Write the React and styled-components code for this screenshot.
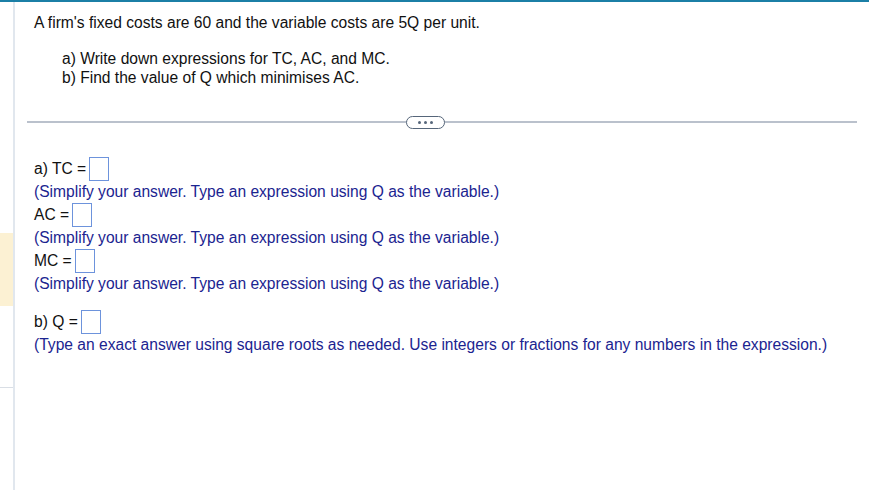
import React from "react";
import styled, { createGlobalStyle } from "styled-components";

const GlobalStyle = createGlobalStyle`
  html, body {
    margin: 0;
    padding: 0;
    background: #fff;
  }
  body {
    font-family: "Liberation Sans", Arial, sans-serif;
    font-size: 15.6px;
    color: #111;
  }
`;

const parts = [
  { label: "a) TC =", hint: "(Simplify your answer. Type an expression using Q as the variable.)" },
  { label: "AC =", hint: "(Simplify your answer. Type an expression using Q as the variable.)" },
  { label: "MC =", hint: "(Simplify your answer. Type an expression using Q as the variable.)" },
];

export default function App() {
  return (
    <>
      <GlobalStyle />
      <TopBar />
      <Page>
        <Sidebar>
          <SideGap $h={231} />
          <SideHighlight />
          <SideGap $h={81} $divider />
        </Sidebar>
        <Content>
          <Question>
            <p>A firm's fixed costs are 60 and the variable costs are 5Q per unit.</p>
            <SubList>
              <li>a) Write down expressions for TC, AC, and MC.</li>
              <li>b) Find the value of Q which minimises AC.</li>
            </SubList>
          </Question>

          <Separator>
            <MoreButton>
              <span />
              <span />
              <span />
            </MoreButton>
          </Separator>

          <Answers>
            {parts.map((p) => (
              <React.Fragment key={p.label}>
                <AnswerRow>
                  {p.label}
                  <AnswerBox />
                </AnswerRow>
                <Hint>{p.hint}</Hint>
              </React.Fragment>
            ))}
            <AnswerRow $spaced>
              b) Q =
              <AnswerBox />
            </AnswerRow>
            <Hint>
              (Type an exact answer using square roots as needed. Use integers or fractions for any numbers in the expression.)
            </Hint>
          </Answers>
        </Content>
      </Page>
    </>
  );
}

const TopBar = styled.div`
  height: 2px;
  background: #1b7fa6;
`;

const Page = styled.div`
  display: flex;
  min-height: 488px;
`;

const Sidebar = styled.aside`
  width: 13px;
  flex-shrink: 0;
  border-right: 2px solid #e1e7ee;
  display: flex;
  flex-direction: column;
`;

const SideGap = styled.div`
  height: ${(p) => p.$h}px;
  border-bottom: ${(p) => (p.$divider ? "1px solid #d9dee5" : "none")};
`;

const SideHighlight = styled.div`
  height: 73px;
  background: #fcf1d3;
`;

const Content = styled.main`
  flex: 1;
  padding: 11px 12px 0 19px;
`;

const Question = styled.section`
  line-height: 19px;

  p {
    margin: 0;
  }
`;

const SubList = styled.ul`
  list-style: none;
  margin: 17px 0 0;
  padding: 0 0 0 28px;
`;

const Separator = styled.div`
  position: relative;
  display: flex;
  justify-content: center;
  align-items: center;
  margin: 28px 0 0 -7px;
  height: 14px;

  &::before {
    content: "";
    position: absolute;
    left: 0;
    right: 0;
    top: 6px;
    height: 2px;
    background: #bac1cc;
  }
`;

const MoreButton = styled.div`
  position: relative;
  display: flex;
  align-items: center;
  justify-content: center;
  gap: 3px;
  width: 37px;
  height: 11px;
  border: 1px solid #56667a;
  border-radius: 7px;
  background: #fff;
  margin-right: 34px;

  span {
    width: 3px;
    height: 3px;
    border-radius: 50%;
    background: #56667a;
  }
`;

const Answers = styled.section`
  margin-top: 28px;
`;

const AnswerRow = styled.div`
  display: flex;
  align-items: center;
  height: 24px;
  margin-top: ${(p) => (p.$spaced ? "15px" : "0")};
`;

const AnswerBox = styled.span`
  display: inline-block;
  width: 18px;
  height: 22px;
  margin-left: 3px;
  border: 1px solid #6d93dc;
`;

const Hint = styled.div`
  color: #1b2490;
  line-height: 22px;
`;
